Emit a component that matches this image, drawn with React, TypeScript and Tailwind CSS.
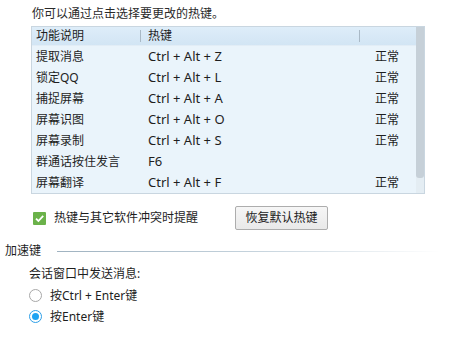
import React from 'react';

// Hotkey settings panel
const ROWS: { name: string; key: string; status: string }[] = [
  { name: '提取消息', key: 'Ctrl + Alt + Z', status: '正常' },
  { name: '锁定QQ', key: 'Ctrl + Alt + L', status: '正常' },
  { name: '捕捉屏幕', key: 'Ctrl + Alt + A', status: '正常' },
  { name: '屏幕识图', key: 'Ctrl + Alt + O', status: '正常' },
  { name: '屏幕录制', key: 'Ctrl + Alt + S', status: '正常' },
  { name: '群通话按住发言', key: 'F6', status: '' },
  { name: '屏幕翻译', key: 'Ctrl + Alt + F', status: '正常' },
];

function Radio({ checked, label }: { checked?: boolean; label: string }) {
  return (
    <div className="flex items-center h-[21px]">
      <span
        className={`w-[13px] h-[13px] rounded-full border flex items-center justify-center bg-white ${
          checked ? 'border-[#2d9fe8]' : 'border-[#a8a8a8]'
        }`}
      >
        {checked && <span className="w-[7px] h-[7px] rounded-full bg-[#1fa3f2]" />}
      </span>
      <span className="ml-[8px]">{label}</span>
    </div>
  );
}

export default function App() {
  return (
    <div
      className="w-[451px] h-[347px] bg-white text-[12px] text-[#1e1e1e] overflow-hidden"
      style={{ fontFamily: '"Noto Sans", "Noto Sans CJK SC", sans-serif' }}
    >
      <div className="pl-[32px] pt-[6px] h-[26px] leading-[16px] text-[#2a2a2a]">你可以通过点击选择要更改的热键。</div>

      {/* Hotkey table */}
      <div className="ml-[31px] w-[394px] h-[168px] border border-[#c9d6e0] bg-[#eaf4fb] flex">
        <div className="flex-1 flex flex-col">
          <div className="h-[19px] flex items-center bg-gradient-to-b from-[#deedf9] to-[#d2e5f4] border-b border-[#e2edf6]">
            <div className="w-[108px] pl-[4px]">功能说明</div>
            <div className="w-px h-[12px] bg-[#a9b9c6]" />
            <div className="w-[218px] pl-[7px]">热键</div>
            <div className="w-px h-[12px] bg-[#a9b9c6]" />
          </div>
          {ROWS.map((r) => (
            <div key={r.name} className="h-[21px] flex items-center">
              <div className="w-[108px] pl-[4px]">{r.name}</div>
              <div className="w-[219px] pl-[8px] text-[13px]">{r.key}</div>
              <div className="flex-1 pl-[16px]">{r.status}</div>
            </div>
          ))}
        </div>
        <div className="w-[8px] bg-[#e4edf3]">
          <div className="h-[151px] bg-[#c6d0d8] rounded-b-[3px]" />
        </div>
      </div>

      {/* Conflict reminder + reset */}
      <div className="flex items-center mt-[12px] h-[24px]">
        <div className="ml-[33px] w-[13px] h-[13px] bg-[#6bb24a] flex items-center justify-center rounded-[1px]">
          <svg width="11" height="11" viewBox="0 0 11 11">
            <path d="M2 5.6 L4.4 8 L9.2 2.8" fill="none" stroke="white" strokeWidth="1.8" />
          </svg>
        </div>
        <span className="ml-[8px]">热键与其它软件冲突时提醒</span>
        <button className="ml-[37px] w-[93px] h-[24px] border border-[#adadad] rounded-[2px] bg-gradient-to-b from-[#f6f6f6] to-[#e9e9e9] text-[#222]">
          恢复默认热键
        </button>
      </div>

      {/* Accelerator section */}
      <div className="flex items-center mt-[12px] h-[18px]">
        <span className="pl-[5px]">加速键</span>
        <div className="ml-[16px] flex-1 h-px mr-[10px] bg-gradient-to-r from-[#9fb2c0] via-[#c4d2dc] to-transparent" />
      </div>
      <div className="pl-[29px] mt-[3px] h-[21px] leading-[21px]">会话窗口中发送消息:</div>
      <div className="pl-[29px] mt-[1px]">
        <Radio label="按Ctrl + Enter键" />
        <Radio checked label="按Enter键" />
      </div>
    </div>
  );
}
